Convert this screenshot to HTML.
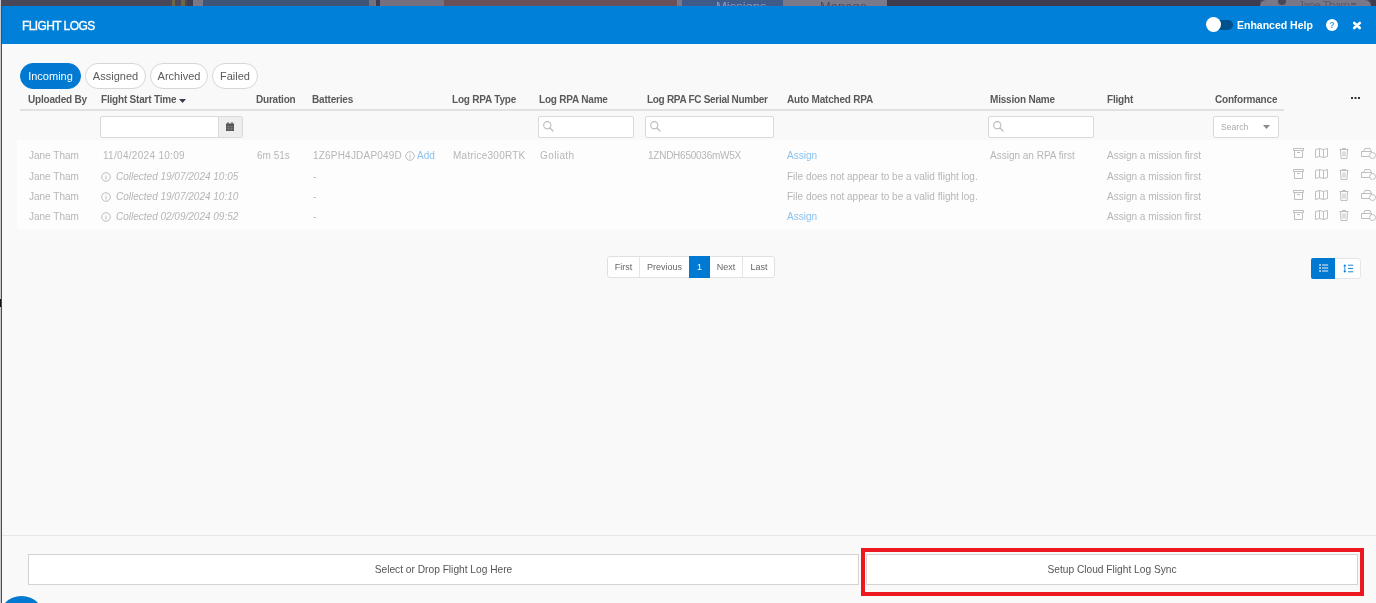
<!DOCTYPE html>
<html><head><meta charset="utf-8">
<style>
*{margin:0;padding:0;box-sizing:border-box}
html,body{width:1376px;height:603px;overflow:hidden;background:#f9f9f9;font-family:"Liberation Sans",sans-serif;position:relative;-webkit-font-smoothing:antialiased}
#wrap{position:absolute;left:0;top:0;width:1376px;height:603px;will-change:transform;overflow:hidden}
.a{position:absolute}
.ts{top:0;height:6px}
#lstrip{left:0;top:0;width:1px;height:603px;background:#c9c8cc}
#lstrip2{left:1px;top:0;width:1px;height:603px;background:#4a4a60}
#hdr{left:2px;top:6px;width:1374px;height:38px;background:#0080d8}
#title{left:22px;top:19px;color:#fff;font-size:12px;letter-spacing:-0.6px;line-height:14px;-webkit-text-stroke:0.35px #fff}
.pill{top:63px;height:26px;border-radius:13px;border:1px solid #d6d6d6;background:#fff;color:#5a5a5a;font-size:11px;line-height:24px;text-align:center}
.pill.on{background:#0079d2;border-color:#0079d2;color:#fff}
.th{top:94px;font-size:10px;font-weight:bold;color:#5a5a5a;letter-spacing:-0.2px;line-height:12px;white-space:nowrap}
#divider{left:20px;top:109px;width:1264px;height:2px;background:#e1e1e1}
.inp{top:116px;height:22px;background:#fff;border:1px solid #d9d9de;border-radius:2px}
#rows{left:17px;top:140px;width:1359px;height:89px;background:#fdfdfd}
.c{font-size:10px;color:#b6b6b6;white-space:nowrap;line-height:12px}
.c.b{color:#8cc2ee}
.c i{font-style:italic}
#pag{left:607px;top:256px;width:168px;height:22px;background:#fff;border:1px solid #e0e0e0;border-radius:3px}
.pg{top:256px;height:22px;line-height:22px;font-size:9px;color:#666;text-align:center}
.vsep{top:257px;width:1px;height:20px;background:#e4e4e4}
.box{top:554px;height:31px;background:#fff;border:1px solid #d3d3d3;font-size:10.2px;color:#555;text-align:center;line-height:29px}
svg{position:absolute;overflow:visible}
</style></head><body><div id="wrap">
<!-- top background strip -->
<div class="a ts" style="left:0;width:1376px;background:#4a4858"></div>
<div class="a ts" style="left:172px;width:3px;background:#6e6648"></div>
<div class="a ts" style="left:181px;width:4px;background:#6e6648"></div>
<div class="a ts" style="left:187px;width:6px;background:#3e3c50"></div>
<div class="a ts" style="left:193px;width:10px;background:#7a7888"></div>
<div class="a ts" style="left:203px;width:166px;background:#3f5578;border-radius:0 0 0 0"></div>
<div class="a ts" style="left:369px;width:7px;background:#747080"></div>
<div class="a ts" style="left:376px;width:4px;background:#3e3c50"></div>
<div class="a ts" style="left:380px;width:64px;background:#747080"></div>
<div class="a ts" style="left:444px;width:233px;background:#6a5058"></div>
<div class="a ts" style="left:677px;width:5px;background:#7a7888"></div>
<div class="a ts" style="left:682px;width:101px;background:#405a8a"></div>
<div class="a ts" style="left:783px;width:104px;background:#7c7a8a"></div>
<div class="a ts" style="left:887px;width:373px;background:#3e3d50"></div>
<div class="a ts" style="left:1260px;width:111px;background:#7a7888;border-radius:6px 6px 0 0"></div>
<div class="a" style="left:1278px;top:-3px;width:8px;height:8px;border-radius:50%;background:#4a4858"></div>
<div class="a" style="left:1298px;top:-1px;font-size:11.5px;letter-spacing:-0.7px;line-height:12px;color:#5c5a6c">Jane Tham</div>
<div class="a" style="left:1351px;top:3px;width:5px;height:2px;background:#5c5a6c"></div>
<div class="a" style="left:716px;top:1px;font-size:13px;line-height:12px;color:#8a9ac0">Missions</div>
<div class="a" style="left:820px;top:1px;font-size:13px;line-height:12px;color:#4e4c5e">Manage</div>
<div class="a ts" style="left:1371px;width:5px;background:#3e3d50"></div>

<div class="a" id="lstrip"></div>
<div class="a" id="lstrip2"></div>
<div class="a" style="left:0;top:299px;width:1px;height:8px;background:#111"></div>
<div class="a" id="hdr"></div>
<div class="a" id="title">FLIGHT LOGS</div>

<!-- enhanced help toggle -->
<div class="a" style="left:1206px;top:20px;width:27px;height:10px;border-radius:5px;background:#00528f"></div>
<div class="a" style="left:1206px;top:17px;width:15px;height:15px;border-radius:50%;background:#fff"></div>
<div class="a" style="left:1237px;top:19px;font-size:10.5px;font-weight:bold;color:#fff;line-height:13px;letter-spacing:0px">Enhanced Help</div>
<div class="a" style="left:1326px;top:19px;width:12px;height:12px;border-radius:50%;background:#fff;color:#4b9fe0;font-size:9px;font-weight:bold;line-height:12px;text-align:center">?</div>
<svg style="left:1353px;top:22px" width="8" height="7" viewBox="0 0 8 7"><path d="M1.2 1 L6.8 6 M6.8 1 L1.2 6" stroke="#fff" stroke-width="2.6" stroke-linecap="round"/></svg>

<div class="a pill on" style="left:20px;width:61px">Incoming</div>
<div class="a pill" style="left:85px;width:61px">Assigned</div>
<div class="a pill" style="left:150px;width:58px">Archived</div>
<div class="a pill" style="left:212px;width:46px">Failed</div>

<div class="a th" style="left:28px">Uploaded By</div>
<div class="a th" style="left:101px">Flight Start Time</div>
<svg style="left:179px;top:99px" width="7" height="4" viewBox="0 0 7 4"><path d="M0 0 L7 0 L3.5 4 Z" fill="#3a3a48"/></svg>
<div class="a th" style="left:256px">Duration</div>
<div class="a th" style="left:312px">Batteries</div>
<div class="a th" style="left:452px">Log RPA Type</div>
<div class="a th" style="left:539px">Log RPA Name</div>
<div class="a th" style="left:647px;letter-spacing:-0.3px">Log RPA FC Serial Number</div>
<div class="a th" style="left:787px">Auto Matched RPA</div>
<div class="a th" style="left:990px">Mission Name</div>
<div class="a th" style="left:1107px">Flight</div>
<div class="a th" style="left:1215px">Conformance</div>
<div class="a" style="left:1351px;top:97px;width:2px;height:2px;background:#333;box-shadow:3.5px 0 0 #333,7px 0 0 #333"></div>
<div class="a" id="divider"></div>

<!-- filter inputs -->
<div class="a inp" style="left:100px;width:143px"></div>
<div class="a" style="left:218px;top:117px;width:24px;height:20px;background:#eeeeee;border-left:1px solid #dadada;border-radius:0 2px 2px 0"></div>
<svg style="left:226px;top:122px" width="8" height="9" viewBox="0 0 8 9"><rect x="0" y="1.5" width="8" height="7.5" fill="#555"/><rect x="1.5" y="0" width="1" height="2" fill="#555"/><rect x="5.5" y="0" width="1" height="2" fill="#555"/><path d="M0 4.5H8M0 6.7H8M2.7 4V9M5.3 4V9" stroke="#888" stroke-width="0.5"/></svg>
<div class="a inp" style="left:538px;width:96px"></div>
<div class="a inp" style="left:645px;width:129px"></div>
<div class="a inp" style="left:988px;width:106px"></div>
<svg style="left:543px;top:121px" width="11" height="11" viewBox="0 0 11 11"><circle cx="4.3" cy="4.2" r="3.6" fill="none" stroke="#bcbcbc" stroke-width="1.1"/><path d="M7 7 L10 10" stroke="#bcbcbc" stroke-width="1.2" stroke-linecap="round"/></svg>
<svg style="left:650px;top:121px" width="11" height="11" viewBox="0 0 11 11"><circle cx="4.3" cy="4.2" r="3.6" fill="none" stroke="#bcbcbc" stroke-width="1.1"/><path d="M7 7 L10 10" stroke="#bcbcbc" stroke-width="1.2" stroke-linecap="round"/></svg>
<svg style="left:993px;top:121px" width="11" height="11" viewBox="0 0 11 11"><circle cx="4.3" cy="4.2" r="3.6" fill="none" stroke="#bcbcbc" stroke-width="1.1"/><path d="M7 7 L10 10" stroke="#bcbcbc" stroke-width="1.2" stroke-linecap="round"/></svg>
<div class="a inp" style="left:1213px;width:66px"></div>
<div class="a" style="left:1221px;top:121px;font-size:8.6px;color:#aaa;line-height:12px">Search</div>
<svg style="left:1263px;top:125px" width="7" height="4" viewBox="0 0 7 4"><path d="M0 0 L7 0 L3.5 4 Z" fill="#8a8a8a"/></svg>

<!-- rows -->
<div class="a" id="rows"></div>
<div class="a c" style="left:29px;top:150px">Jane Tham</div>
<div class="a c" style="left:103px;top:150px;letter-spacing:0.3px">11/04/2024 10:09</div>
<div class="a c" style="left:257px;top:150px">6m 51s</div>
<div class="a c" style="left:313px;top:150px;letter-spacing:0.2px">1Z6PH4JDAP049D</div>
<svg style="left:405px;top:151px" width="10" height="10" viewBox="0 0 10 10"><circle cx="5" cy="5" r="4.3" fill="none" stroke="#b5b5b5" stroke-width="0.9"/><path d="M5 4.2V7.5M5 2.6V3.3" stroke="#b5b5b5" stroke-width="0.9"/></svg>
<div class="a c b" style="left:417px;top:150px">Add</div>
<div class="a c" style="left:453px;top:150px;letter-spacing:0.25px">Matrice300RTK</div>
<div class="a c" style="left:540px;top:150px;letter-spacing:0.4px">Goliath</div>
<div class="a c" style="left:648px;top:150px;letter-spacing:-0.25px">1ZNDH650036mW5X</div>
<div class="a c b" style="left:787px;top:150px">Assign</div>
<div class="a c" style="left:990px;top:150px">Assign an RPA first</div>
<div class="a c" style="left:1107px;top:150px">Assign a mission first</div>

<div class="a c" style="left:29px;top:171px">Jane Tham</div>
<svg style="left:101px;top:172px" width="10" height="10" viewBox="0 0 10 10"><circle cx="5" cy="5" r="4.3" fill="none" stroke="#b5b5b5" stroke-width="0.9"/><path d="M5 4.2V7.5M5 2.6V3.3" stroke="#b5b5b5" stroke-width="0.9"/></svg>
<div class="a c" style="left:116px;top:171px"><i>Collected 19/07/2024 10:05</i></div>
<div class="a c" style="left:313px;top:171px">-</div>
<div class="a c" style="left:787px;top:171px">File does not appear to be a valid flight log.</div>
<div class="a c" style="left:1107px;top:171px">Assign a mission first</div>

<div class="a c" style="left:29px;top:191px">Jane Tham</div>
<svg style="left:101px;top:192px" width="10" height="10" viewBox="0 0 10 10"><circle cx="5" cy="5" r="4.3" fill="none" stroke="#b5b5b5" stroke-width="0.9"/><path d="M5 4.2V7.5M5 2.6V3.3" stroke="#b5b5b5" stroke-width="0.9"/></svg>
<div class="a c" style="left:116px;top:191px"><i>Collected 19/07/2024 10:10</i></div>
<div class="a c" style="left:313px;top:191px">-</div>
<div class="a c" style="left:787px;top:191px">File does not appear to be a valid flight log.</div>
<div class="a c" style="left:1107px;top:191px">Assign a mission first</div>

<div class="a c" style="left:29px;top:211px">Jane Tham</div>
<svg style="left:101px;top:212px" width="10" height="10" viewBox="0 0 10 10"><circle cx="5" cy="5" r="4.3" fill="none" stroke="#b5b5b5" stroke-width="0.9"/><path d="M5 4.2V7.5M5 2.6V3.3" stroke="#b5b5b5" stroke-width="0.9"/></svg>
<div class="a c" style="left:116px;top:211px"><i>Collected 02/09/2024 09:52</i></div>
<div class="a c" style="left:313px;top:211px">-</div>
<div class="a c b" style="left:787px;top:211px">Assign</div>
<div class="a c" style="left:1107px;top:211px">Assign a mission first</div>

<!-- row action icons -->
<svg style="left:1293px;top:148px" width="11" height="10" viewBox="0 0 11 10"><path d="M0.5 0.5H10.5V2.5H0.5Z M1.5 2.5V9.5H9.5V2.5 M4 4.5H7" fill="none" stroke="#b8b8b8" stroke-width="0.9"/></svg>
<svg style="left:1315px;top:148px" width="13" height="10" viewBox="0 0 13 10"><path d="M0.5 1.5L4.5 0.5L8.5 1.5L12.5 0.5V8.5L8.5 9.5L4.5 8.5L0.5 9.5Z M4.5 0.5V8.5 M8.5 1.5V9.5" fill="none" stroke="#b8b8b8" stroke-width="0.9"/></svg>
<svg style="left:1339px;top:148px" width="10" height="11" viewBox="0 0 10 11"><path d="M0.5 1.5H9.5 M3.5 1.5V0.5H6.5V1.5 M1.5 1.5L2 10.5H8L8.5 1.5 M4 3.5V8.5 M6 3.5V8.5" fill="none" stroke="#b8b8b8" stroke-width="0.9"/></svg>
<svg style="left:1361px;top:148px" width="15" height="11" viewBox="0 0 15 11"><path d="M2.5 3.5L4 0.5H9L10.5 3.5 M0.5 3.5H10.5V8.5H0.5Z" fill="none" stroke="#b8b8b8" stroke-width="0.9"/><circle cx="11.5" cy="7.5" r="3" fill="#fdfdfd" stroke="#b8b8b8" stroke-width="0.9"/></svg>
<svg style="left:1293px;top:169px" width="11" height="10" viewBox="0 0 11 10"><path d="M0.5 0.5H10.5V2.5H0.5Z M1.5 2.5V9.5H9.5V2.5 M4 4.5H7" fill="none" stroke="#b8b8b8" stroke-width="0.9"/></svg>
<svg style="left:1315px;top:169px" width="13" height="10" viewBox="0 0 13 10"><path d="M0.5 1.5L4.5 0.5L8.5 1.5L12.5 0.5V8.5L8.5 9.5L4.5 8.5L0.5 9.5Z M4.5 0.5V8.5 M8.5 1.5V9.5" fill="none" stroke="#b8b8b8" stroke-width="0.9"/></svg>
<svg style="left:1339px;top:169px" width="10" height="11" viewBox="0 0 10 11"><path d="M0.5 1.5H9.5 M3.5 1.5V0.5H6.5V1.5 M1.5 1.5L2 10.5H8L8.5 1.5 M4 3.5V8.5 M6 3.5V8.5" fill="none" stroke="#b8b8b8" stroke-width="0.9"/></svg>
<svg style="left:1361px;top:169px" width="15" height="11" viewBox="0 0 15 11"><path d="M2.5 3.5L4 0.5H9L10.5 3.5 M0.5 3.5H10.5V8.5H0.5Z" fill="none" stroke="#b8b8b8" stroke-width="0.9"/><circle cx="11.5" cy="7.5" r="3" fill="#fdfdfd" stroke="#b8b8b8" stroke-width="0.9"/></svg>
<svg style="left:1293px;top:190px" width="11" height="10" viewBox="0 0 11 10"><path d="M0.5 0.5H10.5V2.5H0.5Z M1.5 2.5V9.5H9.5V2.5 M4 4.5H7" fill="none" stroke="#b8b8b8" stroke-width="0.9"/></svg>
<svg style="left:1315px;top:190px" width="13" height="10" viewBox="0 0 13 10"><path d="M0.5 1.5L4.5 0.5L8.5 1.5L12.5 0.5V8.5L8.5 9.5L4.5 8.5L0.5 9.5Z M4.5 0.5V8.5 M8.5 1.5V9.5" fill="none" stroke="#b8b8b8" stroke-width="0.9"/></svg>
<svg style="left:1339px;top:190px" width="10" height="11" viewBox="0 0 10 11"><path d="M0.5 1.5H9.5 M3.5 1.5V0.5H6.5V1.5 M1.5 1.5L2 10.5H8L8.5 1.5 M4 3.5V8.5 M6 3.5V8.5" fill="none" stroke="#b8b8b8" stroke-width="0.9"/></svg>
<svg style="left:1361px;top:190px" width="15" height="11" viewBox="0 0 15 11"><path d="M2.5 3.5L4 0.5H9L10.5 3.5 M0.5 3.5H10.5V8.5H0.5Z" fill="none" stroke="#b8b8b8" stroke-width="0.9"/><circle cx="11.5" cy="7.5" r="3" fill="#fdfdfd" stroke="#b8b8b8" stroke-width="0.9"/></svg>
<svg style="left:1293px;top:210px" width="11" height="10" viewBox="0 0 11 10"><path d="M0.5 0.5H10.5V2.5H0.5Z M1.5 2.5V9.5H9.5V2.5 M4 4.5H7" fill="none" stroke="#b8b8b8" stroke-width="0.9"/></svg>
<svg style="left:1315px;top:210px" width="13" height="10" viewBox="0 0 13 10"><path d="M0.5 1.5L4.5 0.5L8.5 1.5L12.5 0.5V8.5L8.5 9.5L4.5 8.5L0.5 9.5Z M4.5 0.5V8.5 M8.5 1.5V9.5" fill="none" stroke="#b8b8b8" stroke-width="0.9"/></svg>
<svg style="left:1339px;top:210px" width="10" height="11" viewBox="0 0 10 11"><path d="M0.5 1.5H9.5 M3.5 1.5V0.5H6.5V1.5 M1.5 1.5L2 10.5H8L8.5 1.5 M4 3.5V8.5 M6 3.5V8.5" fill="none" stroke="#b8b8b8" stroke-width="0.9"/></svg>
<svg style="left:1361px;top:210px" width="15" height="11" viewBox="0 0 15 11"><path d="M2.5 3.5L4 0.5H9L10.5 3.5 M0.5 3.5H10.5V8.5H0.5Z" fill="none" stroke="#b8b8b8" stroke-width="0.9"/><circle cx="11.5" cy="7.5" r="3" fill="#fdfdfd" stroke="#b8b8b8" stroke-width="0.9"/></svg>


<!-- pagination -->
<div class="a" id="pag"></div>
<div class="a pg" style="left:607px;width:33px">First</div>
<div class="a vsep" style="left:639px"></div>
<div class="a pg" style="left:640px;width:49px">Previous</div>
<div class="a" style="left:689px;top:256px;width:21px;height:22px;background:#0079d2;color:#fff;font-size:9px;line-height:22px;text-align:center">1</div>
<div class="a pg" style="left:710px;width:32px">Next</div>
<div class="a vsep" style="left:742px"></div>
<div class="a pg" style="left:743px;width:32px">Last</div>

<!-- view toggles -->
<div class="a" style="left:1311px;top:258px;width:50px;height:21px;background:#fff;border:1px solid #e6e6e6;border-radius:3px"></div>
<div class="a" style="left:1311px;top:258px;width:24px;height:21px;background:#0079d2;border-radius:2px 0 0 2px"></div>
<svg style="left:1319px;top:264px" width="10" height="8" viewBox="0 0 10 8"><path d="M0.3 1H1.8M0.3 4H1.8M0.3 7H1.8" stroke="#fff" stroke-width="1.5"/><path d="M3 1H9.2M3 4H9.2M3 7H9.2" stroke="#fff" stroke-width="0.9"/></svg>
<svg style="left:1343px;top:264px" width="11" height="9" viewBox="0 0 11 9"><path d="M1.8 1.5V7.5" stroke="#0079d2" stroke-width="0.8"/><path d="M0.2 2.2L1.8 0.3L3.4 2.2ZM0.2 6.8L1.8 8.7L3.4 6.8Z" fill="#0079d2"/><path d="M5 1.2H10.2M5 4.5H10.2M5 7.8H10.2" stroke="#0079d2" stroke-width="0.9"/></svg>

<!-- footer -->
<div class="a" style="left:2px;top:535px;width:1374px;height:1px;background:#e6e6e6"></div>
<div class="a box" style="left:28px;width:831px">Select or Drop Flight Log Here</div>
<div class="a box" style="left:866px;width:492px">Setup Cloud Flight Log Sync</div>
<div class="a" style="left:861px;top:548px;width:503px;height:48px;border:4px solid #ec1820"></div>
<div class="a" style="left:-2px;top:596px;width:47px;height:47px;border-radius:50%;background:#0079d2"></div>
</div></body></html>
